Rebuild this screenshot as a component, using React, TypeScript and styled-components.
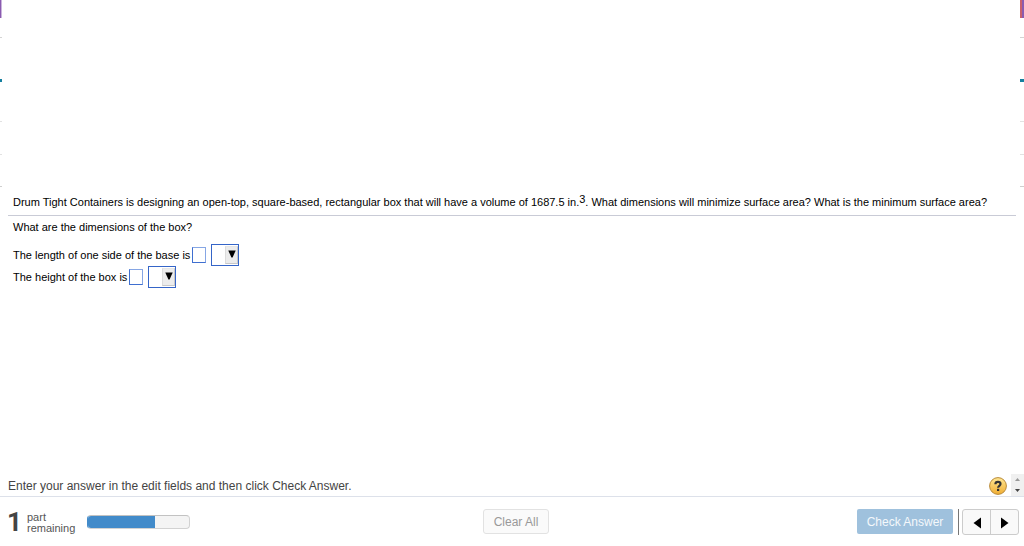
import React from 'react';
import styled, { createGlobalStyle } from 'styled-components';

const GlobalStyle = createGlobalStyle`
  *, *::before, *::after { box-sizing: border-box; }
  body {
    margin: 0;
    background: #fff;
    color: #000;
    font-family: "Liberation Sans", Arial, sans-serif;
    font-size: 11px;
  }
  button, input, select { font: inherit; margin: 0; padding: 0; }
`;

const Page = styled.div`
  display: flex;
  flex-direction: column;
  min-height: 100vh;
`;

const TopArea = styled.div`
  display: flex;
  justify-content: space-between;
  height: 187px;
`;

const Edge = styled.div<{ $width: number }>`
  display: flex;
  flex-direction: column;
  width: ${(p) => p.$width}px;
`;

const Mark = styled.div<{ $gap: number; $height: number; $color: string }>`
  margin-top: ${(p) => p.$gap}px;
  height: ${(p) => p.$height}px;
  background: ${(p) => p.$color};
`;

const Content = styled.main`
  flex: 1;
  padding: 0 8px;
`;

const Statement = styled.p`
  margin: 0;
  padding: 4px 5px 2px;
  line-height: 22px;
  border-bottom: 1px solid #c9cbd6;
`;

const Sup = styled.sup`
  font-size: 11px;
  line-height: 0;
  vertical-align: 3px;
`;

const Question = styled.p`
  margin: 0;
  padding: 3px 5px 0;
  line-height: 16px;
`;

const Answers = styled.form`
  padding: 9px 5px 0;
`;

const AnswerRow = styled.div`
  display: flex;
  align-items: center;
  height: 22px;
`;

const AnswerLabel = styled.label`
  margin-right: 2px;
`;

const AnswerInput = styled.input`
  width: 14px;
  height: 16px;
  margin-right: 5px;
  border: 1px solid #3f6fd0;
  border-top-color: #86a6e4;
  border-right-color: #86a6e4;
  border-radius: 0;
  outline: 0;
`;

const UnitBox = styled.span`
  display: grid;
  width: 28px;
  height: 22px;
  align-items: center;
  > * { grid-area: 1 / 1; }
`;

const UnitSelect = styled.select`
  appearance: none;
  width: 28px;
  height: 22px;
  border: 1px solid #3565c8;
  border-radius: 0;
  background: #fff;
`;

const UnitArrow = styled.span`
  display: flex;
  justify-self: end;
  justify-content: center;
  width: 13px;
  height: 18px;
  margin-right: 1px;
  padding-top: 3px;
  border: 1px solid #c8c8c8;
  border-top-color: #e6e6e6;
  border-left-color: #dcdcdc;
  background: #ececec;
  pointer-events: none;
`;

const HintRow = styled.div`
  display: flex;
  align-items: center;
  height: 22px;
  padding-left: 8px;
  color: #444;
  font-size: 12px;
`;

const Hint = styled.span`
  padding-top: 2px;
`;

const HelpButton = styled.button`
  display: flex;
  margin-left: auto;
  margin-right: 4px;
  padding-top: 2px;
  border: 0;
  background: none;
`;

const Stepper = styled.div`
  display: flex;
  flex-direction: column;
  width: 13px;
  height: 22px;
  background: #f0f0f0;
`;

const StepButton = styled.button`
  display: flex;
  flex: 1;
  align-items: center;
  justify-content: center;
  border: 0;
  background: none;
`;

const Footer = styled.footer`
  display: grid;
  grid-template-columns: 1fr auto 1fr;
  align-items: center;
  height: 50px;
  border-top: 1px solid #dde1ea;
`;

const Progress = styled.div`
  display: flex;
  align-items: center;
  padding-left: 7px;
`;

const Count = styled.span`
  width: 20px;
  color: #444;
  font-family: Roboto, Arial, sans-serif;
  font-size: 26px;
  font-weight: bold;
  line-height: 26px;
`;

const Remaining = styled.span`
  display: flex;
  flex-direction: column;
  width: 60px;
  padding-top: 2px;
  color: #555;
  font-size: 11px;
  line-height: 11px;
`;

const Track = styled.div`
  width: 103px;
  height: 14px;
  overflow: hidden;
  border: 1px solid #d2d2d2;
  border-top-color: #c2c2c2;
  border-left-color: #428bca;
  border-radius: 4px;
  background: #f4f4f4;
`;

const Bar = styled.div`
  width: 67px;
  height: 14px;
  background: #428bca;
`;

const ClearButton = styled.button`
  width: 66px;
  height: 25px;
  margin-left: 8px;
  border: 1px solid #e2e2e2;
  border-radius: 3px;
  background: #fafafa;
  color: #999;
  font-size: 12px;
`;

const Actions = styled.div`
  display: flex;
  align-items: center;
  justify-content: flex-end;
  padding-right: 5px;
`;

const CheckButton = styled.button`
  width: 96px;
  height: 25px;
  border: 0;
  border-radius: 2px;
  background: #9fc1dd;
  color: #f4f8fb;
  font-size: 12px;
`;

const Divider = styled.span`
  width: 1px;
  height: 26px;
  margin: 0 3px 0 5px;
  background: #777;
`;

const Pager = styled.div`
  display: flex;
  width: 57px;
  height: 26px;
  border: 1px solid #ccc;
  border-radius: 3px;
  background: #f9f9f9;
`;

const PageButton = styled.button`
  display: flex;
  flex: 1;
  align-items: center;
  justify-content: center;
  padding-top: 3px;
  border: 0;
  background: none;
  & + & { border-left: 1px solid #ccc; }
`;

const marks = [
  { gap: 19, height: 1, color: '#d4d4d4' },
  { gap: 41, height: 3, color: '#147f9f' },
  { gap: 39, height: 1, color: '#e2e2e2' },
  { gap: 32, height: 1, color: '#e2e2e2' },
  { gap: 31, height: 1, color: '#cfcfcf' },
];

function EdgeStrip({ width, top }: { width: number; top: string }) {
  return (
    <Edge $width={width}>
      <Mark $gap={0} $height={18} $color={top} />
      {marks.map((m, i) => (
        <Mark key={i} $gap={m.gap} $height={m.height} $color={m.color} />
      ))}
    </Edge>
  );
}

function Answer({ id, label }: { id: string; label: string }) {
  return (
    <AnswerRow>
      <AnswerLabel htmlFor={id}>{label}</AnswerLabel>
      <AnswerInput id={id} type="text" />
      <UnitBox>
        <UnitSelect aria-label="Unit" defaultValue="">
          <option value="" />
        </UnitSelect>
        <UnitArrow>
          <svg width="8" height="8" viewBox="0 0 8 8">
            <path d="M0.3 0.5h7.4L4.6 7.5h-1.2z" fill="#000" />
          </svg>
        </UnitArrow>
      </UnitBox>
    </AnswerRow>
  );
}

export default function App() {
  return (
    <Page>
      <GlobalStyle />
      <TopArea>
        <EdgeStrip width={2} top="linear-gradient(90deg, #8a5bb0 50%, #cbb5dc 50%)" />
        <EdgeStrip width={4} top="linear-gradient(90deg, #c8606c 40%, #8a5bb0 40%)" />
      </TopArea>
      <Content>
        <Statement>
          Drum Tight Containers is designing an open-top, square-based, rectangular box that will
          have a volume of 1687.5 in.<Sup>3</Sup>. What dimensions will minimize surface area? What
          is the minimum surface area?
        </Statement>
        <Question>What are the dimensions of the box?</Question>
        <Answers>
          <Answer id="base" label="The length of one side of the base is" />
          <Answer id="height" label="The height of the box is" />
        </Answers>
      </Content>
      <HintRow>
        <Hint>Enter your answer in the edit fields and then click Check Answer.</Hint>
        <HelpButton type="button" aria-label="Help">
          <svg width="18" height="20" viewBox="0 0 18 20">
            <defs>
              <linearGradient id="gold" x1="0" y1="0" x2="0" y2="1">
                <stop offset="0" stopColor="#ffe793" />
                <stop offset="1" stopColor="#f0ad32" />
              </linearGradient>
            </defs>
            <circle cx="9" cy="10" r="8.4" fill="url(#gold)" stroke="#b98a3a" />
            <path
              d="M6.4 8.2C6.4 6.6 7.4 5.9 9 5.9s2.5 0.8 2.5 2.1c0 1.8-2.4 1.8-2.4 3.8"
              fill="none"
              stroke="#333"
              strokeWidth="2.2"
            />
            <path d="M8 12.8h2.2v2.2H8z" fill="#333" />
          </svg>
        </HelpButton>
        <Stepper>
          <StepButton type="button" aria-label="Scroll up">
            <svg width="5" height="3" viewBox="0 0 5 3">
              <path d="M0 3L2.5 0L5 3z" fill="#999" />
            </svg>
          </StepButton>
          <StepButton type="button" aria-label="Scroll down">
            <svg width="5" height="3" viewBox="0 0 5 3">
              <path d="M0 0L2.5 3L5 0z" fill="#444" />
            </svg>
          </StepButton>
        </Stepper>
      </HintRow>
      <Footer>
        <Progress>
          <Count>1</Count>
          <Remaining>
            <span>part</span>
            <span>remaining</span>
          </Remaining>
          <Track role="progressbar" aria-label="Progress" aria-valuenow={66}>
            <Bar />
          </Track>
        </Progress>
        <ClearButton type="button">Clear All</ClearButton>
        <Actions>
          <CheckButton type="button">Check Answer</CheckButton>
          <Divider />
          <Pager>
            <PageButton type="button" aria-label="Previous">
              <svg width="8" height="12" viewBox="0 0 8 12">
                <path d="M8 0.5v11L0.5 6z" />
              </svg>
            </PageButton>
            <PageButton type="button" aria-label="Next">
              <svg width="8" height="12" viewBox="0 0 8 12">
                <path d="M0 0.5v11L7.5 6z" />
              </svg>
            </PageButton>
          </Pager>
        </Actions>
      </Footer>
    </Page>
  );
}
